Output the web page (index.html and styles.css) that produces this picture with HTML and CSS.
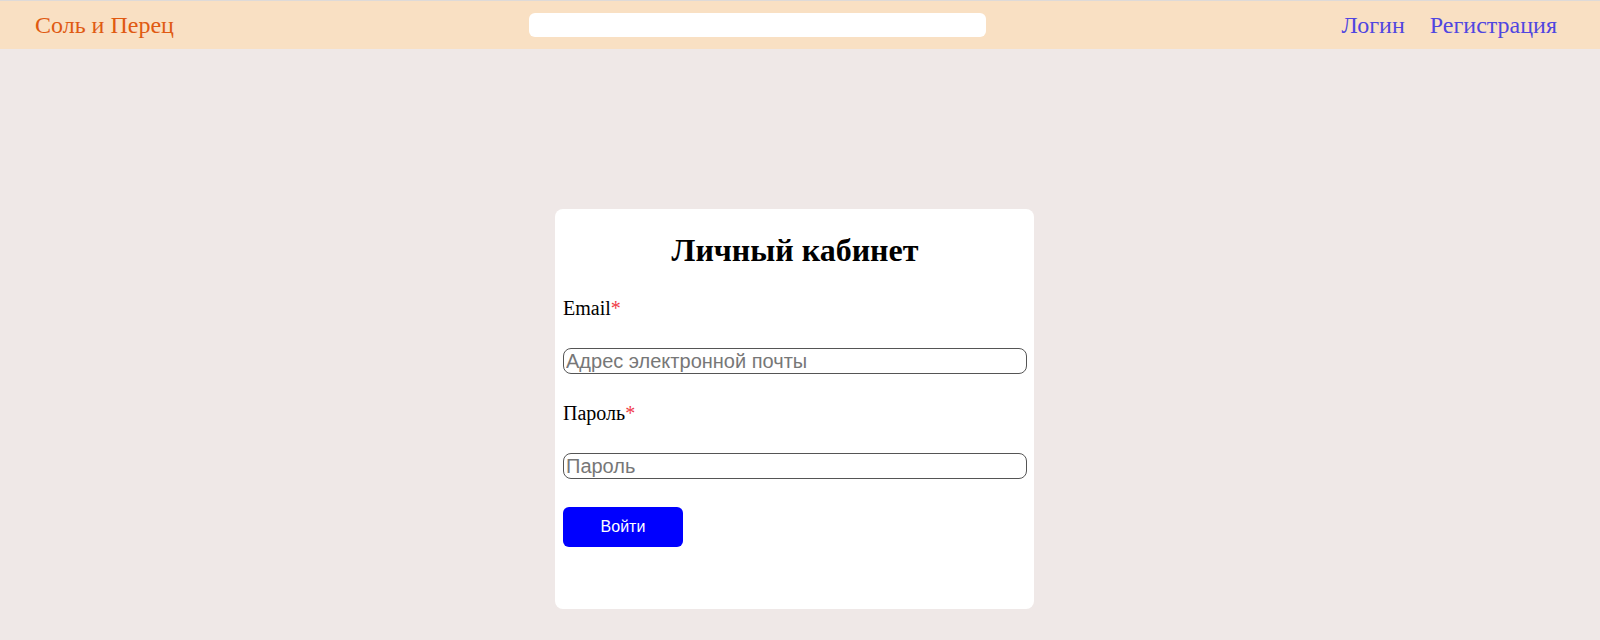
FILE: index.html
```html
<!DOCTYPE html>
<html lang="ru">

<head>
    <meta charset="UTF-8">
    <meta name="viewport" content="width=device-width, initial-scale=1.0">
    <title>Соль и Перец — Личный кабинет</title>
    <link rel="stylesheet" href="styles.css">
</head>

<body>

    <header class="header">
        <a class="logo" href="/">Соль и Перец</a>
        <input class="search" type="text">
        <nav class="nav">
            <a href="/login">Логин</a>
            <a href="/register">Регистрация</a>
        </nav>
    </header>

    <main class="main">
        <form class="card" action="/login" method="post">
            <h1>Личный кабинет</h1>

            <label for="email">Email<span class="req">*</span></label>
            <input class="field" type="email" id="email" name="email" placeholder="Адрес электронной почты" required>

            <label for="password">Пароль<span class="req">*</span></label>
            <input class="field" type="password" id="password" name="password" placeholder="Пароль" required>

            <button type="submit">Войти</button>
        </form>
    </main>

</body>

</html>
```

FILE: styles.css
```css
body {
    background-color: #efe8e7;
    font-family: "Liberation Serif", "Times New Roman", serif;
    margin: 0;
    padding: 0;
}

.header {
    display: flex;
    justify-content: space-between;
    align-items: center;
    height: 48px;
    padding: 0 43px 0 35px;
    background-color: #f9e0c3;
    border-top: 1px solid #dedad8;
}

.logo {
    color: #e05a12;
    font-size: 24px;
    text-decoration: none;
}

.search {
    width: 457px;
    height: 24px;
    margin: 0;
    border: none;
    border-radius: 6px;
    background-color: #fff;
    box-sizing: border-box;
}

.nav {
    display: flex;
    gap: 25px;
}

.nav a {
    color: #5046e0;
    font-size: 24px;
    text-decoration: none;
}

.main {
    display: flex;
    justify-content: center;
    padding: 160px 11px 0 0;
}

.card {
    display: flex;
    flex-direction: column;
    align-items: flex-start;
    width: 479px;
    height: 400px;
    box-sizing: border-box;
    padding: 0 7px 0 8px;
    background-color: #fff;
    border-radius: 8px;
}

h1 {
    align-self: stretch;
    text-align: center;
    font-size: 32px;
    margin: 23px 0 28px;
}

label {
    display: block;
    font-size: 20px;
    margin-bottom: 28px;
}

.req {
    color: #f03a47;
}

.field {
    width: 100%;
    height: 26px;
    box-sizing: border-box;
    padding: 1px 2px;
    border: 1px solid #555;
    border-radius: 8px;
    font-family: "Liberation Sans", Arial, sans-serif;
    font-size: 20px;
    margin: 0 0 28px;
}

.field::placeholder {
    color: #777;
}

button {
    width: 120px;
    height: 40px;
    background-color: #0000ff;
    color: #fff;
    border: none;
    border-radius: 6px;
    font-family: "Liberation Sans", Arial, sans-serif;
    font-size: 16px;
    cursor: pointer;
}
```
